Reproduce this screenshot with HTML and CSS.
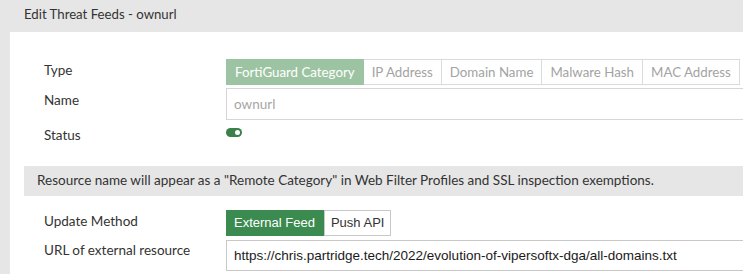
FILE: index.html
```html
<!DOCTYPE html>
<html>
<head>
<meta charset="utf-8">
<link rel="stylesheet" href="styles.css">
</head>
<body>
<div class="header">Edit Threat Feeds - ownurl</div>
<div class="main">
  <div class="row row-type">
    <div class="label lbl-type">Type</div>
    <div class="btn-group">
      <span class="tbtn tbtn-sel">FortiGuard Category</span>
      <span class="tbtn">IP Address</span>
      <span class="tbtn">Domain Name</span>
      <span class="tbtn">Malware Hash</span>
      <span class="tbtn">MAC Address</span>
    </div>
  </div>
  <div class="row row-name">
    <div class="label lbl-name">Name</div>
    <div class="input input-dis">ownurl</div>
  </div>
  <div class="row row-status">
    <div class="label">Status</div>
    <span class="toggle"><span class="knob"></span></span>
  </div>
  <div class="banner">Resource name will appear as a "Remote Category" in Web Filter Profiles and SSL inspection exemptions.</div>
  <div class="row row-update">
    <div class="label lbl-update">Update Method</div>
    <div class="btn-group">
      <span class="ubtn ubtn-sel">External Feed</span>
      <span class="ubtn">Push API</span>
    </div>
  </div>
  <div class="row row-url">
    <div class="label lbl-url">URL of external resource</div>
    <div class="input input-url">https://chris.partridge.tech/2022/evolution-of-vipersoftx-dga/all-domains.txt</div>
  </div>
</div>
</body>
</html>
```
FILE: styles.css
```css
html, body {
  margin: 0;
  padding: 0;
  height: 100%;
  overflow: hidden;
}
body {
  background: #e6e6e6;
  font-family: Lato, "Open Sans", sans-serif;
  font-size: 13.5px;
  color: #333;
}
.header {
  height: 32px;
  box-sizing: border-box;
  padding: 6px 0 0 24px;
  font-size: 13.2px;
  line-height: 17px;
  color: #333;
}
.main {
  margin-left: 10px;
  background: #fff;
  height: calc(100% - 32px);
  padding-top: 27px;
  box-sizing: border-box;
}
.row {
  display: flex;
  align-items: flex-start;
  padding-left: 34px;
}
.label {
  width: 182px;
  flex: none;
  line-height: 16px;
  color: #333;
}
.lbl-type { padding-top: 3px; }
.lbl-name { padding-top: 4px; }
.lbl-update { padding-top: 3px; }
.lbl-url { padding-top: 2px; }
.btn-group {
  display: flex;
}
.tbtn {
  height: 26px;
  box-sizing: border-box;
  line-height: 24px;
  font-size: 13.3px;
  padding: 0 8px;
  border: 1px solid #dadada;
  margin-left: -1px;
  color: #a3a3a3;
  white-space: nowrap;
}
.tbtn:first-child { margin-left: 0; }
.tbtn-sel {
  background: #9dc4a2;
  border-color: #9dc4a2;
  color: #fff;
  position: relative;
}
.row-name { margin-top: 3px; }
.input {
  height: 32px;
  box-sizing: border-box;
  width: 540px;
  flex: none;
  border: 1px solid #d6d6d6;
  line-height: 30px;
  padding-left: 7px;
  white-space: nowrap;
}
.input-dis {
  color: #a6a6a6;
}
.row-status { margin-top: 7px; }
.toggle {
  margin-top: 1px;
  width: 16px;
  height: 9px;
  border-radius: 5px;
  background: #3c8049;
  display: flex;
  align-items: center;
  justify-content: flex-end;
  padding-right: 2px;
  box-sizing: border-box;
}
.knob {
  width: 5px;
  height: 5px;
  border-radius: 50%;
  background: #fff;
}
.banner {
  margin: 23px 0 0 14px;
  height: 30px;
  box-sizing: border-box;
  padding: 6px 0 0 13px;
  line-height: 16px;
  background: #e6e6e6;
  color: #333;
  white-space: nowrap;
}
.row-update { margin-top: 14px; }
.ubtn {
  height: 26px;
  box-sizing: border-box;
  line-height: 24px;
  font-family: "Liberation Sans", Arial, sans-serif;
  font-size: 13px;
  padding: 0 6px;
  border: 1px solid #c8c8c8;
  color: #333;
  white-space: nowrap;
}
.ubtn-sel {
  background: #3b8a4f;
  border-color: #3b8a4f;
  color: #fff;
  padding: 0 8px 0 7px;
}
.row-url { margin-top: 4px; }
.input-url {
  height: 31px;
  line-height: 29px;
  font-family: "Liberation Sans", Arial, sans-serif;
  font-size: 13.5px;
  color: #1a1a1a;
  border-color: #c8c8c8;
}
```
